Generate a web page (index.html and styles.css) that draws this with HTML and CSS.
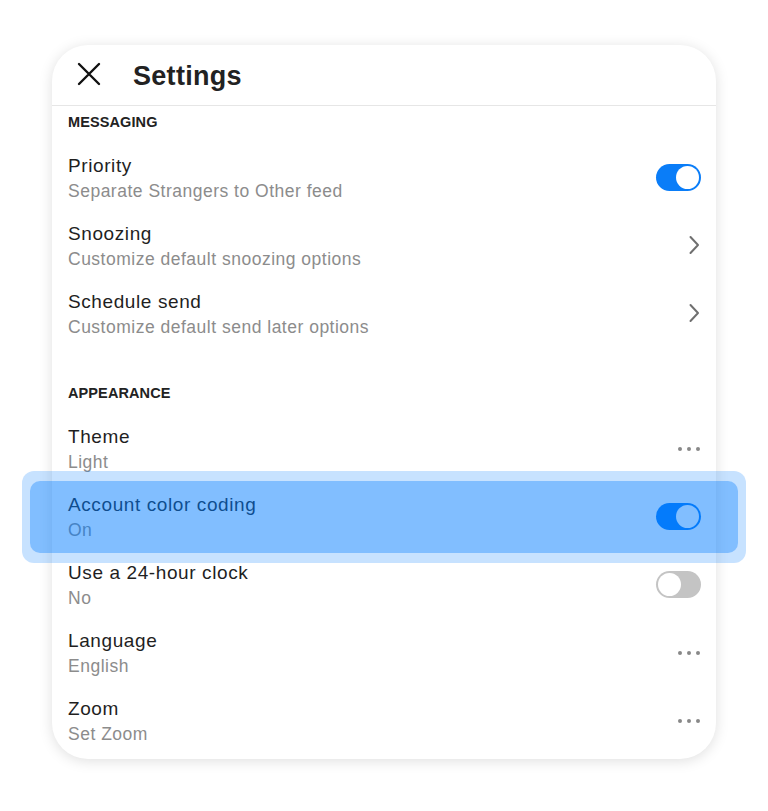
FILE: index.html
```html
<!DOCTYPE html>
<html>
<head>
<meta charset="utf-8">
<link rel="stylesheet" href="styles.css">
</head>
<body>
<div class="page">
  <div class="card">
    <div class="header">
      <svg class="close" viewBox="0 0 24 24" width="24" height="24"><path d="M2 2 L22 22 M22 2 L2 22" stroke="#111" stroke-width="2.4" stroke-linecap="round" fill="none"/></svg>
      <h1 class="title">Settings</h1>
    </div>
    <div class="section-label first">MESSAGING</div>
    <div class="row">
      <div class="text"><div class="t">Priority</div><div class="s">Separate Strangers to Other feed</div></div>
      <span class="toggle on"><span class="knob"></span></span>
    </div>
    <div class="row">
      <div class="text"><div class="t">Snoozing</div><div class="s">Customize default snoozing options</div></div>
      <svg class="chev" viewBox="0 0 12 20" width="12" height="20"><path d="M2.5 2 L10 10 L2.5 18" stroke="#6f6f6f" stroke-width="2" fill="none" stroke-linecap="round" stroke-linejoin="round"/></svg>
    </div>
    <div class="row">
      <div class="text"><div class="t">Schedule send</div><div class="s">Customize default send later options</div></div>
      <svg class="chev" viewBox="0 0 12 20" width="12" height="20"><path d="M2.5 2 L10 10 L2.5 18" stroke="#6f6f6f" stroke-width="2" fill="none" stroke-linecap="round" stroke-linejoin="round"/></svg>
    </div>
    <div class="section-label second">APPEARANCE</div>
    <div class="row">
      <div class="text"><div class="t">Theme</div><div class="s">Light</div></div>
      <span class="dots"><i></i><i></i><i></i></span>
    </div>
    <div class="row">
      <div class="text"><div class="t">Account color coding</div><div class="s">On</div></div>
      <span class="toggle on"><span class="knob"></span></span>
    </div>
    <div class="row">
      <div class="text"><div class="t">Use a 24-hour clock</div><div class="s">No</div></div>
      <span class="toggle off"><span class="knob"></span></span>
    </div>
    <div class="row">
      <div class="text"><div class="t">Language</div><div class="s">English</div></div>
      <span class="dots"><i></i><i></i><i></i></span>
    </div>
    <div class="row">
      <div class="text"><div class="t">Zoom</div><div class="s">Set Zoom</div></div>
      <span class="dots"><i></i><i></i><i></i></span>
    </div>
    <div class="highlight"><div class="highlight-inner"></div></div>
  </div>
</div>
</body>
</html>
```
FILE: styles.css
```css
html, body {
  margin: 0;
  padding: 0;
  background: #ffffff;
}
body {
  font-family: "Liberation Sans", Arial, sans-serif;
  width: 768px;
  height: 811px;
  overflow: hidden;
}
.page {
  padding-top: 45px;
  padding-left: 52px;
}
.card {
  position: relative;
  width: 664px;
  height: 714px;
  background: #fff;
  border-radius: 36px;
  box-shadow: 0 2px 14px rgba(0, 0, 0, 0.13);
  box-sizing: border-box;
}
.header {
  height: 61px;
  display: flex;
  align-items: center;
  border-bottom: 1px solid #e6e6e6;
  padding-left: 25px;
  box-sizing: border-box;
}
.close {
  width: 24px;
  height: 24px;
  margin-top: -2px;
}
.title {
  margin: 2px 0 0 32px;
  font-size: 27px;
  font-weight: bold;
  color: #222;
  letter-spacing: 0.3px;
}
.section-label {
  padding-left: 16px;
  font-size: 14.5px;
  font-weight: bold;
  color: #222;
  line-height: 20px;
  margin-bottom: 11px;
  letter-spacing: 0.1px;
}
.section-label.first { margin-top: 6px; }
.section-label.second { margin-top: 36px; }
.row {
  height: 68px;
  display: flex;
  align-items: center;
  justify-content: space-between;
  padding: 0 15px 0 16px;
  box-sizing: border-box;
}
.text {
  margin-top: 3px;
}
.t {
  font-size: 19px;
  line-height: 24px;
  color: #1f1f1f;
  letter-spacing: 0.6px;
}
.s {
  font-size: 17.5px;
  line-height: 26px;
  color: #8c8c8c;
  letter-spacing: 0.5px;
}
.toggle {
  width: 45px;
  height: 27px;
  border-radius: 14px;
  box-sizing: border-box;
  display: flex;
  align-items: center;
  padding: 2px;
}
.toggle.on {
  background: #0a7df8;
  justify-content: flex-end;
}
.toggle.off {
  background: #c4c4c4;
  justify-content: flex-start;
}
.knob {
  width: 23px;
  height: 23px;
  border-radius: 50%;
  background: #fff;
}
.chev {
  margin-right: 1px;
}
.dots {
  display: flex;
  gap: 5px;
  margin-right: 1px;
  margin-top: 2px;
}
.dots i {
  width: 4px;
  height: 4px;
  border-radius: 50%;
  background: #888;
  display: block;
}
.highlight {
  position: absolute;
  left: -30px;
  top: 426px;
  width: 724px;
  height: 92px;
  border-radius: 12px;
  background: rgba(0, 122, 255, 0.22);
  padding: 10px 8px;
  box-sizing: border-box;
}
.highlight-inner {
  width: 100%;
  height: 100%;
  border-radius: 10px;
  background: rgba(0, 122, 255, 0.35);
}
```
